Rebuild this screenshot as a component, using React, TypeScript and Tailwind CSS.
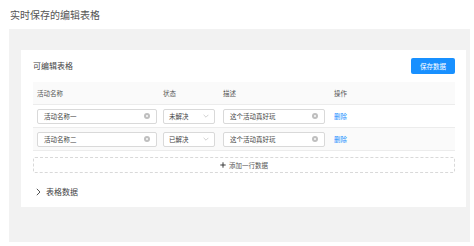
import React from "react";

const font = { fontFamily: '"Noto Sans CJK SC", "Noto Sans", sans-serif' };

function ClearIcon() {
  return (
    <svg width="6" height="6" viewBox="0 0 12 12" className="shrink-0">
      <circle cx="6" cy="6" r="6" fill="#bfbfbf" />
      <path d="M4 4L8 8M8 4L4 8" stroke="#fff" strokeWidth="1.4" />
    </svg>
  );
}

function Chevron() {
  return (
    <svg width="6" height="4" viewBox="0 0 10 6" className="shrink-0">
      <path d="M1 1L5 5L9 1" stroke="#bfbfbf" strokeWidth="1.2" fill="none" />
    </svg>
  );
}

function TextInput({ value, w }: { value: string; w: string }) {
  return (
    <div className={`${w} h-[15px] flex items-center justify-between border border-[#d9d9d9] rounded-[2px] bg-white pl-[6px] pr-[6px]`}>
      <span className="text-[6.5px] text-[#444] leading-none">{value}</span>
      <ClearIcon />
    </div>
  );
}

function Select({ value }: { value: string }) {
  return (
    <div className="w-[52px] h-[15px] flex items-center justify-between border border-[#d9d9d9] rounded-[2px] bg-white pl-[5px] pr-[5px]">
      <span className="text-[6.5px] text-[#444] leading-none">{value}</span>
      <Chevron />
    </div>
  );
}

function Row({ name, status, bg }: { name: string; status: string; bg: string }) {
  return (
    <div className={`flex h-[23px] items-center border-b border-[#ececec] ${bg}`}>
      <div className="w-[126px] pl-[4px] flex items-center">
        <TextInput value={name} w="w-[120px]" />
      </div>
      <div className="w-[60px] pl-[4px] flex items-center">
        <Select value={status} />
      </div>
      <div className="w-[110px] pl-[4px] flex items-center">
        <TextInput value="这个活动真好玩" w="w-[102px]" />
      </div>
      <div className="flex-1 pl-[5px] flex items-center">
        <span className="text-[6.5px] text-[#1890ff] leading-none">删除</span>
      </div>
    </div>
  );
}

export default function App() {
  return (
    <div className="w-[474px] h-[246px] bg-white overflow-hidden leading-none" style={font}>
      <div className="pl-[10px] h-[29px] flex items-center pb-[0px]">
        <span className="text-[10px] text-[#555] leading-none">实时保存的编辑表格</span>
      </div>
      <div className="ml-[9px] w-[461px] h-[213px] bg-[#f2f2f2] pl-[12px] pr-[4px] pt-[21px]">
        <div className="bg-white h-[157px] pl-[12px] pr-[11px] pt-[8px]">
          <div className="flex items-center justify-between h-[16px]">
            <span className="text-[8px] text-[#444] leading-none">可编辑表格</span>
            <div className="w-[44px] h-[16px] bg-[#1890ff] rounded-[2px] flex items-center justify-center">
              <span className="text-[6.5px] text-white leading-none">保存数据</span>
            </div>
          </div>
          <div className="mt-[8px]">
            <div className="flex h-[23px] items-center bg-[#fafafa] border-b border-[#ececec] text-[6.5px] text-[#555] leading-none">
              <div className="w-[126px] pl-[4px]">活动名称</div>
              <div className="w-[60px] pl-[4px]">状态</div>
              <div className="w-[110px] pl-[4px]">描述</div>
              <div className="flex-1 pl-[5px]">操作</div>
            </div>
            <Row name="活动名称一" status="未解决" bg="bg-white" />
            <Row name="活动名称二" status="已解决" bg="bg-[#fafafa]" />
          </div>
          <div className="mt-[6px] h-[16px] border border-dashed border-[#d9d9d9] rounded-[2px] flex items-center justify-center gap-[3px]">
            <svg width="6" height="6" viewBox="0 0 10 10">
              <path d="M5 0.5V9.5M0.5 5H9.5" stroke="#333" strokeWidth="1.6" />
            </svg>
            <span className="text-[6.5px] text-[#555] leading-none">添加一行数据</span>
          </div>
          <div className="mt-[15px] flex items-center gap-[5px] pl-[3px]">
            <svg width="5" height="8" viewBox="0 0 5 8">
              <path d="M0.8 0.8L4 4L0.8 7.2" stroke="#555" strokeWidth="1" fill="none" />
            </svg>
            <span className="text-[8px] text-[#444] leading-none">表格数据</span>
          </div>
        </div>
      </div>
    </div>
  );
}
